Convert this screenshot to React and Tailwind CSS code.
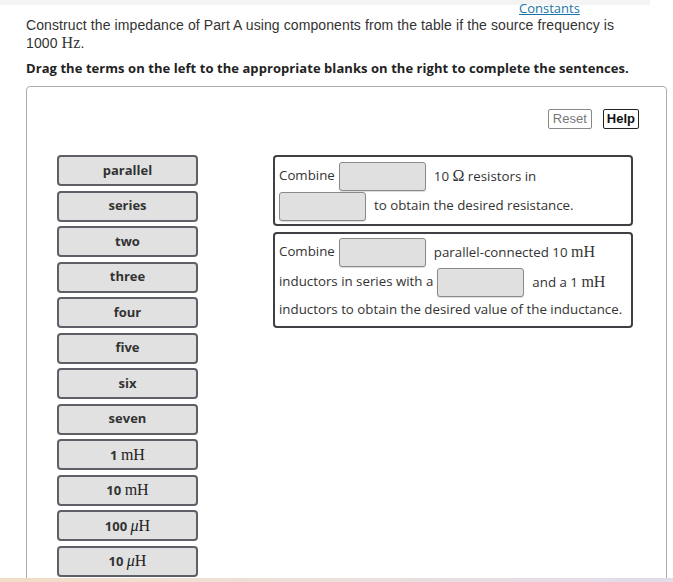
import React from 'react';

const sans = { fontFamily: '"Open Sans", "Noto Sans", sans-serif' };

const terms = [
    { label: 'parallel' },
    { label: 'series' },
    { label: 'two' },
    { label: 'three' },
    { label: 'four' },
    { label: 'five' },
    { label: 'six' },
    { label: 'seven' },
    { num: '1', unit: 'mH' },
    { num: '10', unit: 'mH' },
    { num: '100', mu: true, unit: 'H' },
    { num: '10', mu: true, unit: 'H' },
];

const Math = ({ children, className = '' }) => (
    <span className={`font-['Liberation_Serif','DejaVu_Serif',serif] ${className}`}>{children}</span>
);

const Blank = () => (
    <div className="w-[87px] h-[29px] shrink-0 bg-[#e0e0e0] border border-[#8a8a8a] rounded-[3px] shadow-[0_1px_1px_rgba(0,0,0,0.15)]"></div>
);

const Term = ({ term }) => (
    <div className="h-[31px] w-[141px] flex items-center justify-center bg-[#e1e1e1] border-2 border-[#5f5f68] rounded-[4px] text-[13px] font-bold text-[#333]">
        {term.label ? (
            term.label
        ) : (
            <span>
                {term.num}{' '}
                <Math className="font-normal text-[16px] text-[#222]">
                    {term.mu && <i>μ</i>}
                    {term.unit}
                </Math>
            </span>
        )}
    </div>
);

export default function App() {
    return (
        <div className="relative h-[582px] overflow-hidden bg-white text-[#333]" style={sans}>
            {/* top strip + constants link */}
            <div className="w-[650px] h-[15px] bg-[linear-gradient(#f4f4f4_0_5px,transparent_5px)] pl-[519px] pt-[1px]">
                <a className="block text-[13px] leading-[14px] text-[#1a73a8] underline underline-offset-1">Constants</a>
            </div>

            <div className="px-[26px] pt-[2px]">
                <p className="text-[14px] leading-[17px] text-[#333] font-['Liberation_Sans',Arial,sans-serif] tracking-[0.1px]">
                    Construct the impedance of Part A using components from the table if the source frequency is
                    <br />
                    1000 <Math className="text-[16px]">Hz</Math>.
                </p>
                <p className="mt-[7px] text-[13px] leading-[18px] font-bold text-[#222] tracking-[0.06px]">
                    Drag the terms on the left to the appropriate blanks on the right to complete the sentences.
                </p>

                <div className="mt-[9px] w-[641px] h-[600px] border border-[#ababab] rounded-[4px] pt-[22px]">
                    <div className="flex justify-end gap-[11px] pr-[27px]">
                        <button className="h-[20px] px-[4px] border border-[#888] rounded-[2px] text-[13px] leading-[16px] text-[#777] font-['Liberation_Sans',Arial,sans-serif]">
                            Reset
                        </button>
                        <button className="h-[20px] px-[3px] border border-[#222] rounded-[2px] text-[13px] leading-[16px] font-bold text-[#111] font-['Liberation_Sans',Arial,sans-serif]">
                            Help
                        </button>
                    </div>

                    <div className="flex items-start gap-[75px] pl-[30px] mt-[25px]">
                        <div className="flex flex-col gap-[4.5px] mt-[1px]">
                            {terms.map((t, i) => (
                                <Term key={i} term={t} />
                            ))}
                        </div>

                        <div className="flex flex-col gap-[6px] mt-[1px] text-[13.3px] text-[#333]">
                            <div className="w-[360px] border-2 border-[#3f3f44] rounded-[4px] pl-[4px] pt-[4px] pb-[3px]">
                                <div className="h-[30px] flex items-center">
                                    <span>Combine</span>
                                    <div className="ml-[4px]"><Blank /></div>
                                    <span className="ml-[8px]">
                                        10 <Math className="text-[16px]">Ω</Math> resistors in
                                    </span>
                                </div>
                                <div className="h-[30px] flex items-center">
                                    <Blank />
                                    <span className="ml-[8px]">to obtain the desired resistance.</span>
                                </div>
                            </div>

                            <div className="w-[360px] border-2 border-[#3f3f44] rounded-[4px] pl-[4px] pt-[3px] pb-[3px]">
                                <div className="h-[30px] flex items-center">
                                    <span>Combine</span>
                                    <div className="ml-[4px]"><Blank /></div>
                                    <span className="ml-[8px]">
                                        parallel-connected 10 <Math className="text-[16px]">mH</Math>
                                    </span>
                                </div>
                                <div className="h-[30px] flex items-center">
                                    <span>inductors in series with a</span>
                                    <div className="ml-[4px]"><Blank /></div>
                                    <span className="ml-[8px]">
                                        and a 1 <Math className="text-[16px]">mH</Math>
                                    </span>
                                </div>
                                <div className="h-[26px] flex items-center">
                                    <span>inductors to obtain the desired value of the inductance.</span>
                                </div>
                            </div>
                        </div>
                    </div>
                </div>
            </div>

            {/* bottom gradient strip */}
            <div className="absolute left-0 right-0 bottom-0 h-[4px] bg-[linear-gradient(90deg,#f3dcc6,#ece0dc_50%,#e2dbea)]"></div>
        </div>
    );
}
